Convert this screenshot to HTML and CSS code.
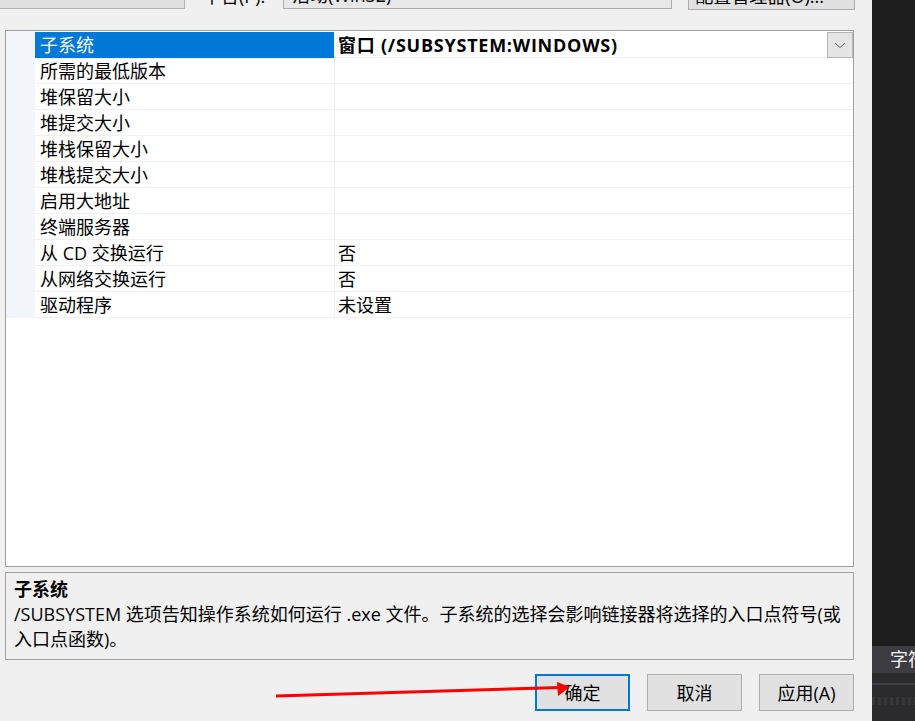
FILE: index.html
```html
<!DOCTYPE html>
<html lang="zh-CN">
<head>
<meta charset="utf-8">
<title>属性页</title>
<link rel="stylesheet" href="styles.css">
</head>
<body>
<div class="screen">
  <div class="dialog">
    <div class="topbar">
      <div class="tb-box tb-first"></div>
      <div class="tb-label"><span class="tb-text">平台(P):</span></div>
      <div class="tb-box tb-combo"><span class="tb-text">活动(Win32)</span></div>
      <div class="tb-box tb-button"><span class="tb-text">配置管理器(O)...</span></div>
    </div>

    <div class="grid">
      <div class="rows">
        <div class="row">
          <div class="gutter"></div>
          <div class="name selected">子系统</div>
          <div class="value bold">窗口 (/SUBSYSTEM:WINDOWS)
            <span class="dropbtn">
              <svg width="12" height="7" viewBox="0 0 12 7"><path d="M1 1 L6 5.5 L11 1" fill="none" stroke="#606060" stroke-width="1"/></svg>
            </span>
          </div>
        </div>
        <div class="row"><div class="gutter"></div><div class="name">所需的最低版本</div><div class="value"></div></div>
        <div class="row"><div class="gutter"></div><div class="name">堆保留大小</div><div class="value"></div></div>
        <div class="row"><div class="gutter"></div><div class="name">堆提交大小</div><div class="value"></div></div>
        <div class="row"><div class="gutter"></div><div class="name">堆栈保留大小</div><div class="value"></div></div>
        <div class="row"><div class="gutter"></div><div class="name">堆栈提交大小</div><div class="value"></div></div>
        <div class="row"><div class="gutter"></div><div class="name">启用大地址</div><div class="value"></div></div>
        <div class="row"><div class="gutter"></div><div class="name">终端服务器</div><div class="value"></div></div>
        <div class="row"><div class="gutter"></div><div class="name">从 CD 交换运行</div><div class="value">否</div></div>
        <div class="row"><div class="gutter"></div><div class="name">从网络交换运行</div><div class="value">否</div></div>
        <div class="row"><div class="gutter"></div><div class="name">驱动程序</div><div class="value">未设置</div></div>
      </div>
    </div>

    <div class="desc">
      <div class="desc-title">子系统</div>
      <div class="desc-text">/SUBSYSTEM 选项告知操作系统如何运行 .exe 文件。子系统的选择会影响链接器将选择的入口点符号(或<br>入口点函数)。</div>
    </div>

    <div class="buttons">
      <button class="btn btn-default">确定</button>
      <button class="btn">取消</button>
      <button class="btn">应用(A)</button>
    </div>

    <svg class="arrow" width="300" height="20" viewBox="0 0 300 20">
      <path d="M0 14 L284 5.5" stroke="#ff0000" stroke-width="3" fill="none"/>
      <path d="M281 0 L294 5 L282 14 Z" fill="#ff0000"/>
    </svg>
  </div>

  <div class="dark">
    <div class="dark-top"></div>
    <div class="dark-band">字符</div>
    <div class="dark-gap"></div>
    <div class="dark-line"></div>
    <div class="dark-bottom"><div class="dark-dots"></div></div>
  </div>
</div>
</body>
</html>
```

FILE: styles.css
```css
* { box-sizing: border-box; }
html, body {
  margin: 0;
  padding: 0;
  width: 915px;
  height: 721px;
  overflow: hidden;
  background: #f0f0f0;
  font-family: "Open Sans", "Noto Sans CJK SC", sans-serif;
  font-size: 18px;
  color: #000;
}
.screen {
  display: flex;
  width: 915px;
  height: 721px;
}
.dialog {
  position: relative;
  width: 872px;
  height: 721px;
  background: #f0f0f0;
  display: flex;
  flex-direction: column;
}

/* top partially visible controls */
.topbar {
  height: 10px;
  overflow: hidden;
  display: flex;
  align-items: flex-end;
  flex-shrink: 0;
}
.tb-box {
  height: 30px;
  background: #e1e1e1;
  border: 1px solid #adadad;
  position: relative;
}
.tb-first {
  width: 187px;
  margin-left: -2px;
  margin-bottom: 1px;
  border-color: #b4b4b4;
}
.tb-label {
  width: 98px;
  padding-left: 18px;
  height: 30px;
  margin-bottom: 1px;
  display: flex;
  align-items: flex-end;
  overflow: hidden;
}
.tb-combo {
  width: 389px;
  margin-bottom: 1px;
  background: #e8e8e8;
  display: flex;
  align-items: flex-end;
  padding-left: 8px;
}
.tb-button {
  width: 167px;
  margin-left: 16px;
  display: flex;
  align-items: flex-end;
  justify-content: flex-end;
  padding-right: 30px;
}
.tb-text {
  line-height: 14px;
  margin-bottom: 6px;
  white-space: nowrap;
}

/* property grid */
.grid {
  margin: 20px 0 0 5px;
  width: 849px;
  height: 537px;
  border: 1px solid #a0a0a0;
  background: #fff;
  padding-top: 1px;
  flex-shrink: 0;
}
.rows {
  display: flex;
  flex-direction: column;
}
.row {
  display: flex;
  height: 26px;
  position: relative;
}
.gutter {
  width: 29px;
  background: #f2f5fa;
  margin-top: -1px;
  height: 27px;
}
.name {
  width: 300px;
  height: 26px;
  padding-left: 5px;
  line-height: 26px;
  border-bottom: 1px solid #f0f0f0;
  border-right: 1px solid #f0f0f0;
  white-space: nowrap;
}
.name.selected {
  background: #0078d7;
  color: #fff;
  border-bottom-color: #0078d7;
  box-shadow: 0 1px 0 #f0f0f0;
}
.value {
  flex: 1;
  height: 26px;
  padding-left: 3px;
  line-height: 26px;
  border-bottom: 1px solid #f0f0f0;
  white-space: nowrap;
  position: relative;
}
.bold { font-weight: bold; letter-spacing: 0.75px; }
.dropbtn {
  position: absolute;
  right: 0;
  top: 0;
  width: 26px;
  height: 26px;
  background: #e5e5e5;
  border: 1px solid #b4b4b4;
  display: flex;
  align-items: center;
  justify-content: center;
}

/* description */
.desc {
  margin: 5px 0 0 5px;
  width: 849px;
  height: 88px;
  border: 1px solid #a0a0a0;
  background: #f0f0f0;
  padding: 4px 0 0 8px;
  line-height: 25px;
  flex-shrink: 0;
}
.desc-title { font-weight: bold; }
.desc-text { white-space: nowrap; }

/* buttons */
.buttons {
  display: flex;
  justify-content: flex-end;
  gap: 17px;
  margin-top: 14px;
  width: 854px;
}
.btn {
  width: 95px;
  height: 37px;
  background: #e1e1e1;
  border: 1px solid #adadad;
  font-family: inherit;
  font-size: 18px;
  color: #000;
  padding: 0;
  line-height: 34px;
}
.btn-default {
  border: 2px solid #0078d7;
}

/* red annotation arrow */
.arrow {
  position: absolute;
  left: 276px;
  top: 682px;
}

/* dark side panel */
.dark {
  width: 43px;
  height: 721px;
  display: flex;
  flex-direction: column;
  background: #1e1e1e;
}
.dark-top { height: 646px; background: #1e1e1e; }
.dark-band {
  height: 27px;
  background: #3c3c41;
  color: #f1f1f1;
  padding-left: 18px;
  line-height: 27px;
  white-space: nowrap;
  overflow: hidden;
}
.dark-gap { height: 10px; background: #2b2b2e; }
.dark-line { height: 2px; background: #3f3f46; }
.dark-bottom {
  flex: 1;
  background: #2b2b2e;
  padding-top: 12px;
}
.dark-dots {
  height: 8px;
  background-image:
    repeating-linear-gradient(90deg, #3a3a3d 0 3px, transparent 3px 6px);
  opacity: 0.8;
}
```
